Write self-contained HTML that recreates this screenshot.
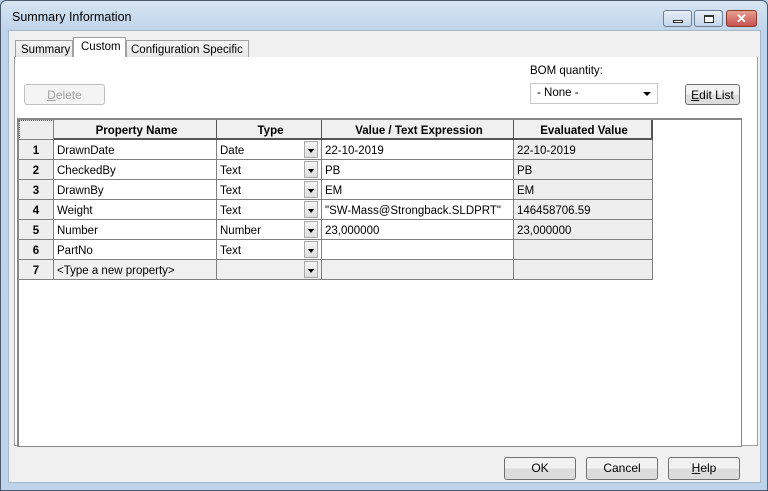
<!DOCTYPE html>
<html><head><style>
*{margin:0;padding:0;box-sizing:border-box}
body{width:768px;height:491px;position:relative;overflow:hidden;background:#bcd3ea;font-family:"Liberation Sans",sans-serif;font-size:11.5px;color:#000}
.a{position:absolute}
.win{left:0;top:0;width:768px;height:491px;border:1px solid #4a5a6a;border-radius:6px 6px 0 0;background:linear-gradient(#d6e4f2,#bfd4ea 30px,#bcd3ea)}
.client{left:8px;top:30px;width:753px;height:453px;background:#f0f0f0;border:1px solid #a8b8c8}
.btn{position:absolute;border:1px solid #707070;border-radius:3px;background:linear-gradient(#f2f2f2 50%,#dcdcdc 50%);text-align:center;font-size:12px;line-height:20px}
.cell{position:absolute;border-right:1px solid #808080;border-bottom:1px solid #808080;height:20px;line-height:19px;padding-left:3px;padding-top:2px;white-space:nowrap;overflow:hidden;font-size:11.5px}
.dd{position:absolute;width:14px;height:17px;background:linear-gradient(#f4f4f4,#dedede);border:1px solid #aaa}
.dd:after{content:"";position:absolute;left:3px;top:7px;border-left:3.5px solid transparent;border-right:3.5px solid transparent;border-top:4px solid #000}
</style></head><body>
<div class="a win"></div>
<div class="a" style="left:12px;top:10px;font-size:12.5px">Summary Information</div>
<div class="a" style="left:663px;top:10px;width:29px;height:17px;border:1px solid #6d7f95;border-radius:3px;background:linear-gradient(#e6eef8,#c4d4e8)"><div class="a" style="left:9px;top:9px;width:10px;height:3px;border:1px solid #333;background:#fff"></div></div>
<div class="a" style="left:694px;top:10px;width:29px;height:17px;border:1px solid #6d7f95;border-radius:3px;background:linear-gradient(#e6eef8,#c4d4e8)"><div class="a" style="left:9px;top:4px;width:10px;height:8px;border:1px solid #333;border-top-width:2px;background:#fff"></div></div>
<div class="a" style="left:726px;top:10px;width:31px;height:17px;border:1px solid #8a3a2c;border-radius:3px;background:linear-gradient(#e8a090,#c75050);color:#fff;text-align:center;font-weight:bold;font-size:13px;line-height:15px">✕</div>
<div class="a client"></div>
<div class="a" style="left:15px;top:40px;width:58px;height:18px;border:1px solid #a0a0a0;border-bottom:none;background:linear-gradient(#f6f6f6,#e4e4e4);padding-left:5px;line-height:18px">Summary</div>
<div class="a" style="left:73px;top:37px;width:53px;height:21px;border:1px solid #a0a0a0;border-bottom:none;background:#fff;padding-left:7px;line-height:18px">Custom</div>
<div class="a" style="left:126px;top:40px;width:123px;height:18px;border:1px solid #a0a0a0;border-bottom:none;background:linear-gradient(#f6f6f6,#e4e4e4);padding-left:4px;line-height:18px;white-space:nowrap">Configuration Specific</div>
<div class="a" style="left:14px;top:57px;width:744px;height:389px;background:#fff;border:1px solid #a0a0a0;border-top:none"></div>
<div class="btn" style="left:24px;top:84px;width:81px;height:21px;color:#a0a0a0;border-color:#c0c0c0;background:#f4f4f4"><u>D</u>elete</div>
<div class="a" style="left:530px;top:65px">BOM quantity:</div>
<div class="a" style="left:530px;top:83px;width:128px;height:21px;border:1px solid #c8c8c8;background:#fff;padding-left:6px;line-height:19px">- None -<span class="a" style="right:6px;top:8px;border-left:4px solid transparent;border-right:4px solid transparent;border-top:4px solid #000"></span></div>
<div class="btn" style="left:685px;top:84px;width:55px;height:21px"><u>E</u>dit List</div>
<div class="a" style="left:17px;top:118px;width:725px;height:329px;background:#fff;border:1px solid #888;border-top:2px solid #888;border-left:2px solid #888"></div>
<div class="a" style="left:19px;top:120px;width:634px;height:161px">
<div class="cell" style="left:0;top:0;width:35px;background:#eee;border-top:1px dotted #555;border-left:1px dotted #555"></div>
<div class="cell" style="left:35px;top:0;width:163px;background:#f0f0f0;text-align:center;font-weight:bold;border-bottom:2px solid #555;border-right:1px solid #555">Property Name</div>
<div class="cell" style="left:198px;top:0;width:105px;background:#f0f0f0;text-align:center;font-weight:bold;border-bottom:2px solid #555;border-right:1px solid #555">Type</div>
<div class="cell" style="left:303px;top:0;width:192px;background:#f0f0f0;text-align:center;font-weight:bold;border-bottom:2px solid #555;border-right:1px solid #555">Value / Text Expression</div>
<div class="cell" style="left:495px;top:0;width:139px;background:#f0f0f0;text-align:center;font-weight:bold;border-bottom:2px solid #555;border-right:2px solid #555">Evaluated Value</div>
</div>
<div class="a" style="left:19px;top:140px;width:634px">
<div class="cell" style="left:0;top:0;width:35px;background:#eee;font-weight:bold;text-align:center;padding-left:0">1</div><div class="cell" style="left:35px;top:0;width:163px">DrawnDate</div><div class="cell" style="left:198px;top:0;width:105px">Date</div><div class="dd" style="left:285px;top:1px"></div><div class="cell" style="left:303px;top:0;width:192px">22-10-2019</div><div class="cell" style="left:495px;top:0;width:139px;background:#eee">22-10-2019</div>
<div class="cell" style="left:0;top:20px;width:35px;background:#eee;font-weight:bold;text-align:center;padding-left:0">2</div><div class="cell" style="left:35px;top:20px;width:163px">CheckedBy</div><div class="cell" style="left:198px;top:20px;width:105px">Text</div><div class="dd" style="left:285px;top:21px"></div><div class="cell" style="left:303px;top:20px;width:192px">PB</div><div class="cell" style="left:495px;top:20px;width:139px;background:#eee">PB</div>
<div class="cell" style="left:0;top:40px;width:35px;background:#eee;font-weight:bold;text-align:center;padding-left:0">3</div><div class="cell" style="left:35px;top:40px;width:163px">DrawnBy</div><div class="cell" style="left:198px;top:40px;width:105px">Text</div><div class="dd" style="left:285px;top:41px"></div><div class="cell" style="left:303px;top:40px;width:192px">EM</div><div class="cell" style="left:495px;top:40px;width:139px;background:#eee">EM</div>
<div class="cell" style="left:0;top:60px;width:35px;background:#eee;font-weight:bold;text-align:center;padding-left:0">4</div><div class="cell" style="left:35px;top:60px;width:163px">Weight</div><div class="cell" style="left:198px;top:60px;width:105px">Text</div><div class="dd" style="left:285px;top:61px"></div><div class="cell" style="left:303px;top:60px;width:192px">"SW-Mass@Strongback.SLDPRT"</div><div class="cell" style="left:495px;top:60px;width:139px;background:#eee">146458706.59</div>
<div class="cell" style="left:0;top:80px;width:35px;background:#eee;font-weight:bold;text-align:center;padding-left:0">5</div><div class="cell" style="left:35px;top:80px;width:163px">Number</div><div class="cell" style="left:198px;top:80px;width:105px">Number</div><div class="dd" style="left:285px;top:81px"></div><div class="cell" style="left:303px;top:80px;width:192px">23,000000</div><div class="cell" style="left:495px;top:80px;width:139px;background:#eee">23,000000</div>
<div class="cell" style="left:0;top:100px;width:35px;background:#eee;font-weight:bold;text-align:center;padding-left:0">6</div><div class="cell" style="left:35px;top:100px;width:163px">PartNo</div><div class="cell" style="left:198px;top:100px;width:105px">Text</div><div class="dd" style="left:285px;top:101px"></div><div class="cell" style="left:303px;top:100px;width:192px"></div><div class="cell" style="left:495px;top:100px;width:139px;background:#eee"></div>
<div class="cell" style="left:0;top:120px;width:35px;background:#eee;font-weight:bold;text-align:center;padding-left:0">7</div><div class="cell" style="left:35px;top:120px;width:163px;background:#f0f0f0">&lt;Type a new property&gt;</div><div class="cell" style="left:198px;top:120px;width:105px;background:#f0f0f0"></div><div class="dd" style="left:285px;top:121px"></div><div class="cell" style="left:303px;top:120px;width:192px;background:#f0f0f0"></div><div class="cell" style="left:495px;top:120px;width:139px;background:#eee"></div>
</div>
<div class="btn" style="left:504px;top:457px;width:72px;height:23px;line-height:21px">OK</div>
<div class="btn" style="left:586px;top:457px;width:72px;height:23px;line-height:21px">Cancel</div>
<div class="btn" style="left:668px;top:457px;width:72px;height:23px;line-height:21px"><u>H</u>elp</div>
</body></html>
